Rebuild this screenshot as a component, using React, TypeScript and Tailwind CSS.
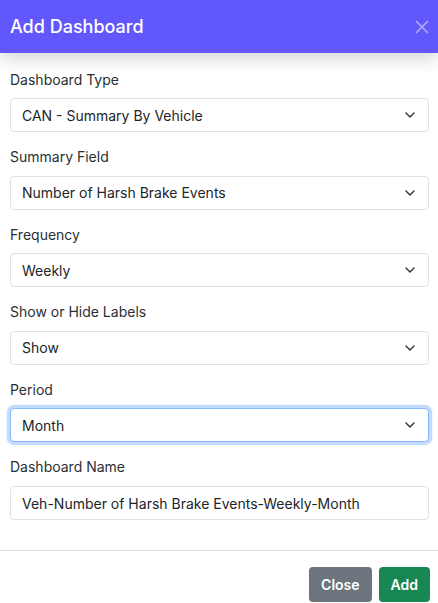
import { ChangeEvent } from "react"

const FONT = "font-['Inter','Liberation_Sans',sans-serif]"

type Field = {
  label: string
  value: string
  kind: "select" | "input"
  focused?: boolean
}

const FIELDS: Field[] = [
  { label: "Dashboard Type", value: "CAN - Summary By Vehicle", kind: "select" },
  { label: "Summary Field", value: "Number of Harsh Brake Events", kind: "select" },
  { label: "Frequency", value: "Weekly", kind: "select" },
  { label: "Show or Hide Labels", value: "Show", kind: "select" },
  { label: "Period", value: "Month", kind: "select", focused: true },
  {
    label: "Dashboard Name",
    value: "Veh-Number of Harsh Brake Events-Weekly-Month",
    kind: "input",
  },
]

function Chevron() {
  return (
    <svg
      viewBox="0 0 10 6"
      className="pointer-events-none absolute right-[14px] top-1/2 h-[6px] w-[10px] -translate-y-1/2"
      fill="none"
      stroke="#343a40"
      strokeWidth="1.5"
      strokeLinecap="round"
      strokeLinejoin="round"
    >
      <path d="M1 1l4 4 4-4" />
    </svg>
  )
}

function FormField({ field }: { field: Field }) {
  const boxClass = field.focused
    ? "border-[#86b7fe] shadow-[0_0_0_0.2rem_rgba(13,110,253,0.25)]"
    : "border-[#dee2e6]"

  return (
    <div className="mb-[14px]">
      <label className="mb-2 block text-[14px] leading-[21.6px] text-[#2b2f33]">
        {field.label}
      </label>
      {field.kind === "select" ? (
        <div className="relative">
          <select
            value={field.value}
            onChange={(_e: ChangeEvent<HTMLSelectElement>) => {}}
            className={`h-[34px] w-full appearance-none rounded-[4px] border bg-white pl-[11px] pr-9 text-[14px] text-[#212529] outline-none ${boxClass}`}
          >
            <option>{field.value}</option>
          </select>
          <Chevron />
        </div>
      ) : (
        <input
          readOnly
          value={field.value}
          className="h-[34px] w-full rounded-[4px] border border-[#dee2e6] bg-white pl-[11px] text-[14px] text-[#212529] outline-none"
        />
      )}
    </div>
  )
}

export default function App() {
  return (
    <div className={`min-h-[603px] w-full bg-white ${FONT}`}>
      <div className="relative z-10 flex h-[53px] items-center justify-between bg-[#6157fa] pl-[10px] pr-[9px] shadow-[0_6px_16px_rgba(0,0,0,0.16)]">
        <h1 className="text-[18px] font-medium text-white">Add Dashboard</h1>
        <button className="p-0 text-white/50">
          <svg viewBox="0 0 14 14" className="h-[14px] w-[14px]" stroke="currentColor" strokeWidth="1.6">
            <path d="M1 1l12 12M13 1L1 13" />
          </svg>
        </button>
      </div>

      <div className="pl-[10px] pr-[9px] pb-4 pt-[15.5px]">
        {FIELDS.map((f) => (
          <FormField key={f.label} field={f} />
        ))}
      </div>

      <div className="flex justify-end gap-[7px] border-t border-[#dee2e6] pr-2 pt-4">
        <button className="h-[35px] rounded-[4px] bg-[#6c757d] px-3 text-[14px] font-semibold text-white">
          Close
        </button>
        <button className="h-[35px] rounded-[4px] bg-[#198754] px-3 text-[14px] font-semibold text-white">
          Add
        </button>
      </div>
    </div>
  )
}
